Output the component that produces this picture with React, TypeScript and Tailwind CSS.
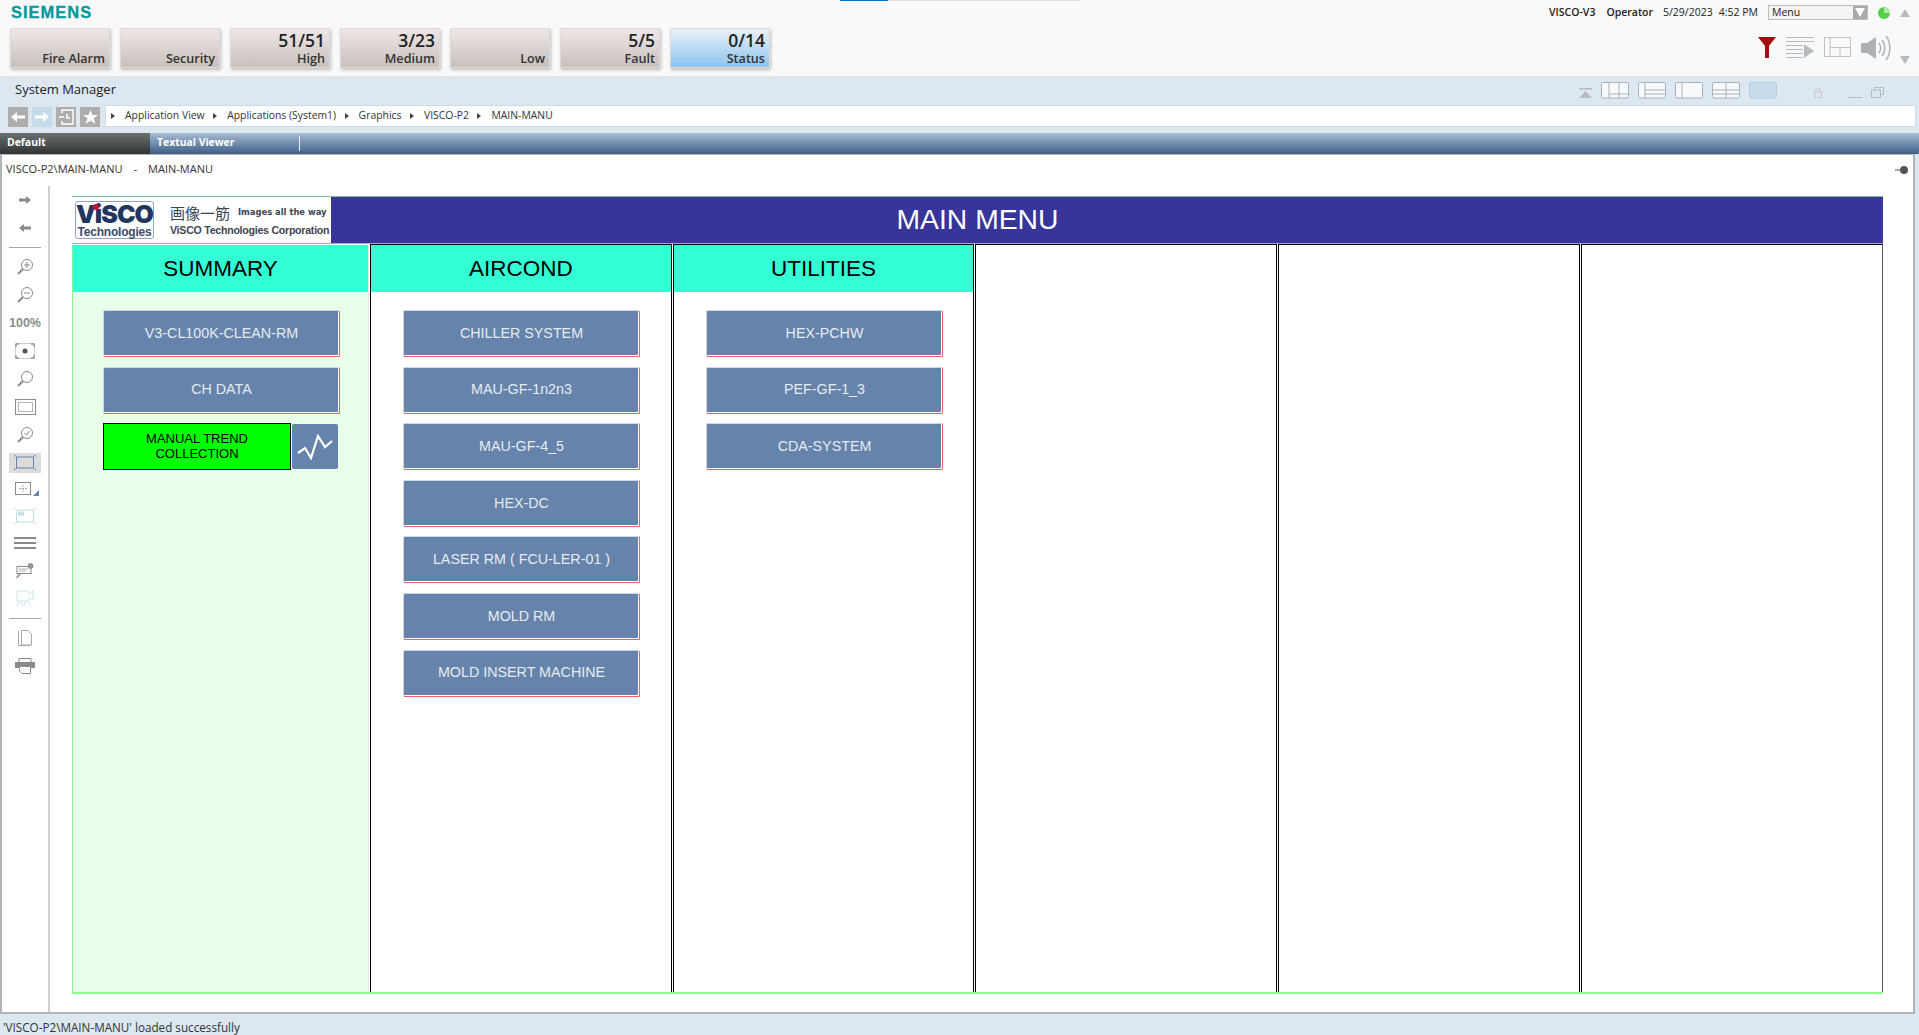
import type { ReactNode } from "react";

const uiFont = "font-['Open_Sans',sans-serif]";
const arial = "font-['Liberation_Sans',Arial,sans-serif]";

const alarms = [
  { label: "Fire Alarm", count: "" },
  { label: "Security", count: "" },
  { label: "High", count: "51/51" },
  { label: "Medium", count: "3/23" },
  { label: "Low", count: "" },
  { label: "Fault", count: "5/5" },
  { label: "Status", count: "0/14", active: true },
];

const crumbs = ["Application View", "Applications (System1)", "Graphics", "VISCO-P2", "MAIN-MANU"];

const aircond = [
  "CHILLER SYSTEM",
  "MAU-GF-1n2n3",
  "MAU-GF-4_5",
  "HEX-DC",
  "LASER RM ( FCU-LER-01 )",
  "MOLD RM",
  "MOLD INSERT MACHINE",
];

const utilities = ["HEX-PCHW", "PEF-GF-1_3", "CDA-SYSTEM"];

function LayoutIcon({ lines, active }: { lines?: string; active?: boolean }) {
  return (
    <svg width="28" height="17" viewBox="0 0 28 17" className="block">
      <rect
        x="0.5"
        y="0.5"
        width="27"
        height="15.5"
        rx="1.5"
        fill={active ? "#c9dcee" : "#f7f9fb"}
        stroke={active ? "#b5cde2" : "#a9b2ba"}
      />
      {lines && <path d={lines} stroke="#a9b2ba" fill="none" />}
    </svg>
  );
}

function Tri({ up }: { up?: boolean }) {
  return (
    <svg width="10" height="8" viewBox="0 0 10 8" className="block">
      <path d={up ? "M5 0L10 8H0Z" : "M0 0H10L5 8Z"} fill="#b4bcc2" />
    </svg>
  );
}

function NavButton({ children, light }: { children: ReactNode; light?: boolean }) {
  return (
    <div className={`w-5 h-5 flex items-center justify-center ${light ? "bg-[#c4dde8]" : "bg-[#adadad]"}`}>
      {children}
    </div>
  );
}

function ToolItem({ className, children }: { className: string; children: ReactNode }) {
  return <div className={`flex items-center justify-center ${className}`}>{children}</div>;
}

function Magnifier({ mark, color = "#8a8a8a" }: { mark?: string; color?: string }) {
  return (
    <svg width="18" height="18" viewBox="0 0 18 18" fill="none" stroke={color}>
      <circle cx="11" cy="7" r="5.5" />
      <path d="M7 11L2 16" strokeWidth="2" />
      {mark && <path d={mark} />}
    </svg>
  );
}

function Toolbar() {
  return (
    <div className={`w-[48px] shrink-0 border-r-2 border-[#cfcfcf] flex flex-col ${arial}`}>
      <ToolItem className="h-[28px]">
        <svg width="12" height="8" viewBox="0 0 12 8">
          <path d="M0 2.5H7V0L12 4L7 8V5.5H0Z" fill="#8a8a8a" />
        </svg>
      </ToolItem>
      <ToolItem className="h-[28px]">
        <svg width="12" height="8" viewBox="0 0 12 8">
          <path d="M12 2.5H5V0L0 4L5 8V5.5H12Z" fill="#8a8a8a" />
        </svg>
      </ToolItem>
      <ToolItem className="h-[10px]">
        <div className="w-8 h-px bg-[#a8a8a8]" />
      </ToolItem>
      <ToolItem className="h-[29px]">
        <Magnifier mark="M8 7H14M11 4V10" />
      </ToolItem>
      <ToolItem className="h-[28px]">
        <Magnifier mark="M8 7H14" />
      </ToolItem>
      <ToolItem className="h-[28px]">
        <span className="text-[12.5px] font-bold text-[#8c8c8c]">100%</span>
      </ToolItem>
      <ToolItem className="h-[28px]">
        <svg width="20" height="16" viewBox="0 0 20 16" fill="none" stroke="#9a9a9a">
          <rect x="0.5" y="0.5" width="19" height="15" stroke="#cfcfcf" />
          <path d="M1 4V1H4M16 1H19V4M1 12V15H4M16 15H19V12" stroke="#777" />
          <circle cx="10" cy="8" r="2.5" fill="#555" stroke="none" />
        </svg>
      </ToolItem>
      <ToolItem className="h-[27px]">
        <Magnifier />
      </ToolItem>
      <ToolItem className="h-[29px]">
        <svg width="21" height="16" viewBox="0 0 21 16" fill="none">
          <rect x="0.5" y="0.5" width="20" height="15" stroke="#8a8a8a" />
          <rect x="3.5" y="3.5" width="14" height="9" stroke="#b5b5b5" />
        </svg>
      </ToolItem>
      <ToolItem className="h-[28px]">
        <Magnifier mark="M8.5 7L10.5 9L13.5 5" />
      </ToolItem>
      <ToolItem className="h-[27px]">
        <div className="w-8 h-5 bg-[#dcdcdc] flex items-center justify-center">
          <svg width="22" height="15" viewBox="0 0 22 15" fill="none">
            <rect x="2.5" y="2" width="17" height="11" stroke="#6583ab" />
            <path d="M0 2V0H2M20 0H22V2M0 13V15H2M20 15H22V13" stroke="#6583ab" />
          </svg>
        </div>
      </ToolItem>
      <ToolItem className="h-[26px]">
        <svg width="24" height="14" viewBox="0 0 24 14" fill="none" className="ml-[3px]">
          <rect x="0.5" y="0.5" width="15" height="12" stroke="#8a8a8a" />
          <path d="M8 3V10M4 6.5H12" stroke="#a5a5a5" strokeDasharray="2 1" />
          <path d="M24 8V14H18Z" fill="#6583ab" stroke="none" />
        </svg>
      </ToolItem>
      <ToolItem className="h-[27px]">
        <svg width="22" height="16" viewBox="0 0 22 16" fill="none" stroke="#c2dfe6">
          <rect x="2.5" y="2" width="17" height="12" />
          <path d="M0 2V0H2M20 0H22V2M0 14V16H2M20 16H22V14" />
          <rect x="4" y="3.5" width="6" height="4" fill="#c2dfe6" stroke="none" />
        </svg>
      </ToolItem>
      <ToolItem className="h-[28px]">
        <div className="w-[22px] flex flex-col gap-[3px]">
          <div className="h-[2px] bg-[#8a8a8a]" />
          <div className="h-[2px] bg-[#8a8a8a]" />
          <div className="h-[2px] bg-[#8a8a8a]" />
        </div>
      </ToolItem>
      <ToolItem className="h-[28px]">
        <svg width="18" height="16" viewBox="0 0 18 16" fill="none" stroke="#8a8a8a">
          <rect x="1" y="3.5" width="14" height="7" />
          <path d="M3 6H12M3 8H10" stroke="#b0b0b0" />
          <path d="M4 11L0.5 15" strokeWidth="1.5" />
          <circle cx="14.5" cy="3" r="2.5" fill="#999" />
        </svg>
      </ToolItem>
      <ToolItem className="h-[27px]">
        <svg width="18" height="17" viewBox="0 0 18 17" fill="none" stroke="#cde4ea">
          <path d="M1 1H12V4L17 1V10L12 8V11H1Z" />
          <path d="M3 11L1 16M5 11L7 16M10 11L8 16M12 11L14 16" />
        </svg>
      </ToolItem>
      <ToolItem className="h-[12px]">
        <div className="w-8 h-px bg-[#a8a8a8]" />
      </ToolItem>
      <ToolItem className="h-[28px]">
        <svg width="14" height="16" viewBox="0 0 14 16" fill="none" stroke="#a8a8a8">
          <path d="M3.5 0.5H10L13.5 4V15H3.5Z" />
          <path d="M0.5 1V15.5H13" />
        </svg>
      </ToolItem>
      <ToolItem className="h-[28px]">
        <svg width="20" height="16" viewBox="0 0 20 16">
          <path d="M4 4V0.5H16V4" fill="none" stroke="#8a8a8a" />
          <path d="M0 4H20V10H16V8H4V10H0Z" fill="#8a8a8a" />
          <path d="M4.5 8.5H15.5V15.5H7L4.5 13Z" fill="#fff" stroke="#8a8a8a" />
        </svg>
      </ToolItem>
    </div>
  );
}

function GraphicButton({ label }: { label: string }) {
  return (
    <div
      className={`h-[47px] w-[237px] shrink-0 bg-[#6583ab] rounded-[2px] border border-r-[#ff5a5a] border-b-[#ff5a5a] border-t-[#cdd6e4] border-l-[#cdd6e4] shadow-[inset_-1px_-1px_0_#ffffff] flex items-center justify-center text-[14.3px] text-[#e6ebf2] ${arial}`}
    >
      {label}
    </div>
  );
}

function ColumnHeader({ title }: { title: string }) {
  return (
    <div className={`h-[47px] bg-[#33ffd5] flex items-center justify-center text-[22.5px] text-black ${arial}`}>
      {title}
    </div>
  );
}

function Logo() {
  return (
    <div className="w-[259px] h-[46px] shrink-0 bg-white flex items-center pl-[3px]">
      <div className="relative w-[79px] h-[38px] border border-[#8ea2ca] rounded-[3px] flex flex-col items-center justify-center text-[#22355c] font-['Inter',sans-serif] leading-none">
        <span className="text-[25px] font-black tracking-[-1px] h-[22px] leading-[22px]">ViSCO</span>
        <span className={`text-[12px] font-bold mt-[1px] tracking-[-0.2px] text-[#3a4a6a] ${arial}`}>Technologies</span>
        <div className="absolute top-[2px] left-[17px] w-[6px] h-[6px] rounded-full bg-[#c8102e]" />
      </div>
      <div className="ml-[16px] flex flex-col text-[#3d4552]">
        <div className="flex items-center h-[22px]">
          <span className="text-[15px] leading-none font-['Noto_Sans_CJK_JP',serif] w-[68px] whitespace-nowrap">画像一筋</span>
          <span className="text-[8.4px] font-bold font-['DejaVu_Sans',sans-serif] whitespace-nowrap">Images all the way</span>
        </div>
        <span className={`text-[10.6px] font-bold tracking-[-0.25px] whitespace-nowrap ${arial}`}>ViSCO Technologies Corporation</span>
      </div>
    </div>
  );
}

export default function App() {
  return (
    <div className={`relative w-[1919px] h-[1035px] overflow-hidden bg-[#dce7f0] flex flex-col text-[#222] ${uiFont}`}>
      {/* loading strip at the very top */}
      <div className="absolute top-0 left-[840px] flex">
        <div className="w-[48px] h-px bg-[#0078d7]" />
        <div className="w-[193px] h-px bg-[#e0e0e0]" />
      </div>

      {/* Top bar */}
      <div className="h-[76px] shrink-0 bg-[#f9f9f9] flex justify-between">
        <div className="pl-[10px]">
          <div className={`h-[28px] pl-[1px] text-[16.5px] leading-[24px] font-bold tracking-[1px] text-[#009999] [-webkit-text-stroke:0.3px_#009999] ${arial}`}>SIEMENS</div>
          <div className="flex gap-[10px]">
            {alarms.map((a) => (
              <div
                key={a.label}
                className={`w-[100px] h-[40px] flex flex-col items-end justify-end pr-[4px] shadow-[1px_2px_3px_#bdbdbd] border border-[#e0dbd9] ${
                  a.active
                    ? "bg-gradient-to-b from-[#e9f1f7] to-[#8cc4ee]"
                    : "bg-gradient-to-b from-[#efe7e7] to-[#c8c0bb]"
                }`}
              >
                {a.count && <span className="text-[17.5px] font-semibold leading-[22px] text-[#222]">{a.count}</span>}
                <span className="text-[12.6px] font-semibold leading-[16px] text-[#333]">{a.label}</span>
              </div>
            ))}
          </div>
        </div>
        <div className="flex flex-col items-end pr-[9px]">
          <div className="h-[25px] flex items-center text-[10.5px] text-[#222]">
            <span className="font-semibold">VISCO-V3</span>
            <span className="ml-[11px] font-semibold">Operator</span>
            <span className="ml-[10px]">5/29/2023</span>
            <span className="ml-[6px]">4:52 PM</span>
            <div className="ml-[10px] w-[100px] h-[15px] bg-[#f4f4f4] border border-[#bdbdbd] flex items-center justify-between pl-[3px]">
              <span>Menu</span>
              <div className="w-[14px] h-[13px] bg-[#a9a9a9] flex items-center justify-center">
                <svg width="10" height="9" viewBox="0 0 10 9">
                  <path d="M0 0H10L5 9Z" fill="#fff" />
                </svg>
              </div>
            </div>
            <svg width="12" height="12" viewBox="0 0 12 12" className="ml-[10px]">
              <circle cx="6" cy="6" r="6" fill="#55d14a" />
              <path d="M6 6V0A6 6 0 0 1 12 6Z" fill="#b6e8ae" />
            </svg>
            <div className="ml-[10px]">
              <Tri up />
            </div>
          </div>
          <div className="flex items-start mt-[9px]">
            <svg width="18" height="21" viewBox="0 0 18 21" className="mt-[3px]">
              <path d="M0 0H18L11 9V21H7V9Z" fill="#a30f0f" />
            </svg>
            <svg width="28" height="21" viewBox="0 0 28 21" className="ml-[10px] mt-[3px]" fill="none" stroke="#b4bcc0">
              <path d="M0 0.5H28M0 4.5H28M0 8.5H17M0 12.5H17M0 16.5H17M0 20.5H17" />
              <path d="M18 7L28 14L18 21Z" fill="#b4bcc0" stroke="none" />
            </svg>
            <svg width="27" height="21" viewBox="0 0 27 21" className="ml-[10px] mt-[3px]" fill="none" stroke="#bcc2c6">
              <rect x="0.5" y="0.5" width="26" height="19" />
              <path d="M6 .5V19.5M6 10.5H26.5M16 10.5V19.5" />
            </svg>
            <svg width="31" height="28" viewBox="0 0 31 28" className="ml-[10px]" fill="none" stroke="#acb2b5">
              <path d="M0 9H6L15 3V25L6 19H0Z" fill="#acb2b5" stroke="none" />
              <path d="M18 9C20 12 20 16 18 19M21 6C24.5 10 24.5 18 21 22M25 2C30 8 30 20 25 26" strokeWidth="1.5" />
            </svg>
            <div className="ml-[8px] mt-[22px]">
              <Tri />
            </div>
          </div>
        </div>
      </div>

      {/* System Manager band */}
      <div className="h-[29px] shrink-0 flex items-center justify-between pl-[15px] pr-[35px]">
        <span className="text-[13px] text-[#222] mb-[2px]">System Manager</span>
        <div className="flex items-center">
          <svg width="13" height="10" viewBox="0 0 13 10" className="mr-[9px] mt-[4px]">
            <path d="M0 0H13V1.5H0ZM6.5 3L13 10H0Z" fill="#b4bcc0" />
          </svg>
          <div className="flex gap-[9px]">
            <LayoutIcon lines="M8 .5V16M18 .5V16M8 12H27" />
            <LayoutIcon lines="M7 .5V16M7 8H27M7 12H27" />
            <LayoutIcon lines="M7 .5V16" />
            <LayoutIcon lines="M.5 8H27M.5 12H27M14 .5V16" />
            <LayoutIcon active />
          </div>
          <svg width="8" height="10" viewBox="0 0 8 10" className="ml-[37px] mt-[4px]" fill="none" stroke="#c5cbd0">
            <rect x="0.5" y="4" width="7" height="5.5" />
            <path d="M2 4V2A2 2 0 0 1 6 2V4" />
          </svg>
          <div className="ml-[26px] w-[14px] h-px bg-[#b4bcc0] mt-[13px]" />
          <svg width="13" height="11" viewBox="0 0 13 11" className="ml-[9px] mt-[4px]" fill="none" stroke="#b4bcc0">
            <rect x="0.5" y="3" width="9" height="7.5" />
            <path d="M3.5 3V0.5H12.5V7.5H9.5" />
          </svg>
        </div>
      </div>

      {/* Breadcrumb */}
      <div className="h-[28px] shrink-0 flex items-start pr-[3px]">
        <div className="flex gap-1 pl-[8px] pt-[2px] w-[105px] shrink-0">
          <NavButton>
            <svg width="14" height="10" viewBox="0 0 14 10">
              <path d="M14 3.5H6V0L0 5L6 10V6.5H14Z" fill="#fff" />
            </svg>
          </NavButton>
          <NavButton light>
            <svg width="14" height="10" viewBox="0 0 14 10">
              <path d="M0 3.5H8V0L14 5L8 10V6.5H0Z" fill="#fff" />
            </svg>
          </NavButton>
          <NavButton>
            <svg width="15" height="16" viewBox="0 0 15 16" fill="none" stroke="#fff" strokeWidth="1.5">
              <path d="M3 4V1H14V15H3V12" />
              <path d="M8 5V9H11" />
              <path d="M0 8H5" />
            </svg>
          </NavButton>
          <NavButton>
            <svg width="15" height="14" viewBox="0 0 15 14">
              <path d="M7.5 0L9.5 5H15L10.5 8.5L12.5 14L7.5 10.5L2.5 14L4.5 8.5L0 5H5.5Z" fill="#fff" />
            </svg>
          </NavButton>
        </div>
        <div className="flex-1 h-[22px] bg-white border border-[#cfdbe4] flex items-center text-[10.4px] text-[#333]">
          {crumbs.map((c) => (
            <div key={c} className="flex items-center">
              <svg width="4" height="6" viewBox="0 0 4 6" className="ml-[5px] mr-[10px]">
                <path d="M0 0L4 3L0 6Z" fill="#444" />
              </svg>
              <span className="whitespace-nowrap mr-[3.5px]">{c}</span>
            </div>
          ))}
        </div>
      </div>

      {/* Tab strip */}
      <div className="h-[21px] shrink-0 bg-gradient-to-b from-[#a9bdd3] to-[#3f5f87] flex text-[10.4px] font-bold text-white">
        <div className="w-[150px] bg-gradient-to-b from-[#6a7070] to-[#323535] flex items-center pl-[7px] pb-[1px]">Default</div>
        <div className="w-[150px] flex items-center justify-between pl-[7px] pb-[1px]">
          <span>Textual Viewer</span>
          <div className="w-px h-[15px] bg-[#e8eef4]" />
        </div>
      </div>

      {/* Content frame */}
      <div className="flex-1 min-h-0 bg-white border-l-2 border-r-2 border-b-2 border-t border-[#b3b3b3] mr-[4px] flex flex-col">
        <div className="h-[31px] shrink-0 flex items-center justify-between pl-[4px] pr-[5px] pb-[2px] text-[11px] text-[#333]">
          <div className="flex">
            <span>VISCO-P2\MAIN-MANU</span>
            <span className="ml-[11px]">-</span>
            <span className="ml-[11px]">MAIN-MANU</span>
          </div>
          <svg width="13" height="8" viewBox="0 0 13 8">
            <path d="M0 4H6" stroke="#555" />
            <circle cx="9" cy="4" r="4" fill="#555" />
          </svg>
        </div>
        <div className="flex-1 min-h-0 flex">
          <Toolbar />
          <div className="ml-[22px] pt-[10px] w-[1812px] shrink-0">
            {/* Graphic title */}
            <div className="w-[1811px] h-[48px] flex border-t border-b border-t-[#7cc0a0] border-b-[#a5a3d8]">
              <Logo />
              <div className={`flex-1 bg-[#373599] flex items-center justify-center pr-[259px] pb-[2px] text-[28.3px] text-white ${arial}`}>
                MAIN MENU
              </div>
            </div>

            {/* Columns */}
            <div className="flex gap-px w-[1811px] h-[750px] border-b-2 border-[#90ff90]">
              <div className="w-[297px] shrink-0 bg-[#eaffe9] border-l border-l-[#90ef90] border-r border-r-[#e4e8e4] mt-px">
                <ColumnHeader title="SUMMARY" />
                <div className="pt-[18px] pl-[30px] flex flex-col gap-[9.6px]">
                  <GraphicButton label="V3-CL100K-CLEAN-RM" />
                  <GraphicButton label="CH DATA" />
                  <div className="flex h-[47px]">
                    <div className={`w-[188px] bg-[#00ff00] border border-black flex items-center justify-center text-center text-[13px] leading-[14.7px] text-black ${arial}`}>
                      MANUAL TREND
                      <br />
                      COLLECTION
                    </div>
                    <div className="ml-[1px] mt-[1px] w-[46px] h-[45px] bg-[#6583ab] rounded-[2px] flex items-center justify-center">
                      <svg width="36" height="26" viewBox="0 0 36 26" fill="none" stroke="#fff" strokeWidth="2.2">
                        <path d="M1 19L8 14L14 24L21 2L28 13L35 7" />
                      </svg>
                    </div>
                  </div>
                </div>
              </div>

              <div className="w-[302px] shrink-0 border border-b-0 border-black">
                <ColumnHeader title="AIRCOND" />
                <div className="pt-[18px] pl-[32px] flex flex-col gap-[9.6px]">
                  {aircond.map((b) => (
                    <GraphicButton key={b} label={b} />
                  ))}
                </div>
              </div>

              <div className="w-[301px] shrink-0 border border-b-0 border-black">
                <ColumnHeader title="UTILITIES" />
                <div className="pt-[18px] pl-[32px] flex flex-col gap-[9.6px]">
                  {utilities.map((b) => (
                    <GraphicButton key={b} label={b} />
                  ))}
                </div>
              </div>

              <div className="w-[302px] shrink-0 border border-b-0 border-black" />
              <div className="w-[302px] shrink-0 border border-b-0 border-black" />
              <div className="w-[302px] shrink-0 border border-b-0 border-black border-r-[#556]" />
            </div>
          </div>
        </div>
      </div>

      {/* Status bar */}
      <div className="h-[21px] shrink-0 flex items-start pl-[3px] pt-[5px] text-[11.7px] leading-[16px] text-[#333]">
        'VISCO-P2\MAIN-MANU' loaded successfully
      </div>
    </div>
  );
}
